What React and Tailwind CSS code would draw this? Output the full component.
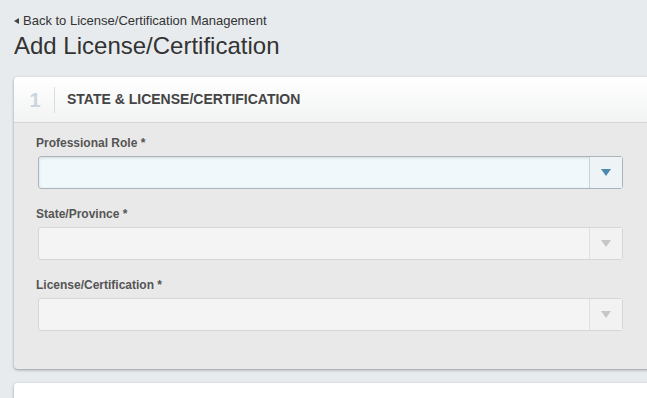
import React from 'react';

// Champ de sélection avec flèche
function SelectField({ label, active }) {
  return (
    <div>
      <label className="block h-4 leading-4 text-[12px] font-bold text-[#555] mb-[5px] ml-[-2px]">
        {label}
      </label>
      <div
        className={`flex h-[33px] w-[585px] rounded-[3px] border ${
          active
            ? 'border-[#a9b4bc] bg-[#f0f8fc] shadow-[inset_0_1px_3px_rgba(0,0,0,0.12)]'
            : 'border-[#d6d6d6] bg-[#f4f4f4]'
        }`}
      >
        <div className="flex-1"></div>
        <div
          className={`flex w-[33px] items-center justify-center border-l ${
            active ? 'border-[#c9d2d8] bg-[#eef3f6]' : 'border-[#e0e0e0] bg-[#f2f2f2]'
          }`}
        >
          <svg width="10" height="7" viewBox="0 0 10 7">
            <path d="M0 0 L10 0 L5 7 Z" fill={active ? '#4a88b0' : '#c6c6c6'} />
          </svg>
        </div>
      </div>
    </div>
  );
}

export default function App() {
  return (
    <div className="h-[398px] w-[647px] overflow-hidden bg-[#e8ebee] font-['Liberation_Sans',Arial,sans-serif]">
      <div className="pl-[14px] pt-[13px]">
        {/* Lien de retour */}
        <a className="flex items-center h-4 text-[13px] leading-4 text-[#333]">
          <svg width="5" height="6" viewBox="0 0 5 6" className="mr-[4px]">
            <path d="M5 0 L5 6 L0 3 Z" fill="#444" />
          </svg>
          Back to License/Certification Management
        </a>
        <h1 className="mt-[3px] text-[24px] leading-[28px] text-[#333]">Add License/Certification</h1>

        {/* Panneau 1 */}
        <div className="mt-[17px] w-[640px] rounded-[4px] bg-[#e9e9e9] shadow-[0_1px_3px_rgba(0,0,0,0.35)]">
          <div className="flex h-[46px] items-center rounded-t-[4px] border-b border-[#d5d5d5] bg-gradient-to-b from-white to-[#f2f3f3]">
            <div className="flex h-[26px] w-[41px] items-center justify-center border-r border-[#dcdcdc]">
              <span className="text-[20px] font-bold text-[#cdd5dc] ml-[2px]">1</span>
            </div>
            <span className="ml-[12px] text-[14px] font-bold text-[#444]">
              STATE &amp; LICENSE/CERTIFICATION
            </span>
          </div>
          <div className="flex flex-col gap-[17px] pl-6 pt-[12px] pb-[38px]">
            <SelectField label="Professional Role *" active />
            <SelectField label="State/Province *" />
            <SelectField label="License/Certification *" />
          </div>
        </div>

        {/* Panneau 2 */}
        <div className="mt-[14px] h-[60px] w-[640px] rounded-[4px] bg-white shadow-[0_1px_3px_rgba(0,0,0,0.35)]">
          <div className="flex h-[46px] items-center">
            <div className="mt-[20px] h-[26px] w-[41px] border-r border-[#dcdcdc]"></div>
          </div>
        </div>
      </div>
    </div>
  );
}
